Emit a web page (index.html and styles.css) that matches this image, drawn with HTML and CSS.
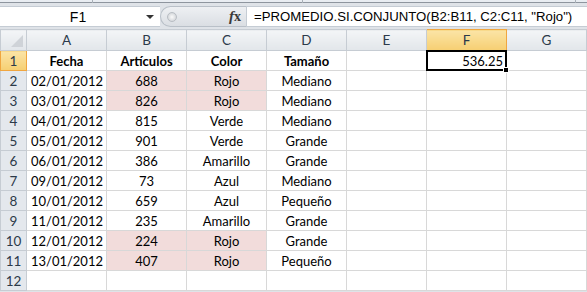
FILE: index.html
```html
<!DOCTYPE html>
<html>
    <head>
        <title>PROMEDIO.SI.CONJUNTO</title>
        <link rel="stylesheet" href="styles.css">
    </head>
    <body>
        <div class="ribbon">
            <span class="rsep s1"></span>
            <span class="rsep s2"></span>
            <span class="rsep s3"></span>
        </div>
        <div class="fbar">
            <div class="namebox">
                <span class="name">F1</span>
                <span class="drop"></span>
            </div>
            <div class="pill">
                <span class="knob"></span>
                <span class="fx"><i>f</i>x</span>
            </div>
            <div class="formula">=PROMEDIO.SI.CONJUNTO(B2:B11, C2:C11, "Rojo")</div>
        </div>
        <table class="sheet">
            <colgroup>
                <col class="rh"><col class="c"><col class="c"><col class="c"><col class="c"><col class="c"><col class="c"><col class="c"><col class="edge">
            </colgroup>
            <thead>
                <tr>
                    <th class="corner"><span class="tri"></span></th>
                    <th>A</th><th>B</th><th>C</th><th>D</th><th>E</th><th class="sel">F</th><th>G</th><th></th>
                </tr>
            </thead>
            <tbody>
                <tr><th class="sel">1</th><td class="b ctr">Fecha</td><td class="b ctr">Artículos</td><td class="b ctr">Color</td><td class="b ctr">Tamaño</td><td></td><td class="active num">536.25<span class="cursor"><span class="handle"></span></span></td><td></td><td></td></tr>
                <tr><th>2</th><td class="num">02/01/2012</td><td class="ctr pink">688</td><td class="ctr pink">Rojo</td><td class="ctr">Mediano</td><td></td><td></td><td></td><td></td></tr>
                <tr><th>3</th><td class="num">03/01/2012</td><td class="ctr pink">826</td><td class="ctr pink">Rojo</td><td class="ctr">Mediano</td><td></td><td></td><td></td><td></td></tr>
                <tr><th>4</th><td class="num">04/01/2012</td><td class="ctr">815</td><td class="ctr">Verde</td><td class="ctr">Mediano</td><td></td><td></td><td></td><td></td></tr>
                <tr><th>5</th><td class="num">05/01/2012</td><td class="ctr">901</td><td class="ctr">Verde</td><td class="ctr">Grande</td><td></td><td></td><td></td><td></td></tr>
                <tr><th>6</th><td class="num">06/01/2012</td><td class="ctr">386</td><td class="ctr">Amarillo</td><td class="ctr">Grande</td><td></td><td></td><td></td><td></td></tr>
                <tr><th>7</th><td class="num">09/01/2012</td><td class="ctr">73</td><td class="ctr">Azul</td><td class="ctr">Mediano</td><td></td><td></td><td></td><td></td></tr>
                <tr><th>8</th><td class="num">10/01/2012</td><td class="ctr">659</td><td class="ctr">Azul</td><td class="ctr">Pequeño</td><td></td><td></td><td></td><td></td></tr>
                <tr><th>9</th><td class="num">11/01/2012</td><td class="ctr">235</td><td class="ctr">Amarillo</td><td class="ctr">Grande</td><td></td><td></td><td></td><td></td></tr>
                <tr><th>10</th><td class="num">12/01/2012</td><td class="ctr pink">224</td><td class="ctr pink">Rojo</td><td class="ctr">Grande</td><td></td><td></td><td></td><td></td></tr>
                <tr><th>11</th><td class="num">13/01/2012</td><td class="ctr pink">407</td><td class="ctr pink">Rojo</td><td class="ctr">Pequeño</td><td></td><td></td><td></td><td></td></tr>
                <tr><th>12</th><td></td><td></td><td></td><td></td><td></td><td></td><td></td><td></td></tr>
            </tbody>
        </table>
    </body>
</html>
```

FILE: styles.css
```css
*{
    margin: 0;
    padding: 0;
    box-sizing: border-box;
}
html{
    background: white;
}
body{
    width: 587px;
    height: 292px;
    overflow: hidden;
    font-family: Lato, "Liberation Sans", sans-serif;
    font-size: 13px;
    color: black;
    background: #dfe3e8;
}
.ribbon{
    position: relative;
    height: 3px;
    background: #e9edf2;
    border-bottom: 1px solid #8e959e;
}
.rsep{
    position: absolute;
    top: 0;
    width: 1px;
    height: 3px;
    background: #a9b0b8;
}
.s1{ left: 92px; }
.s2{ left: 302px; }
.s3{ left: 575px; }
.fbar{
    display: flex;
    height: 26px;
    padding: 3px 0 2px 0;
    background: #dfe3e8;
}
.namebox{
    display: flex;
    align-items: center;
    width: 160px;
    background: white;
    border-top: 1px solid #c5ccd4;
    border-bottom: 1px solid #c5ccd4;
}
.name{
    flex: 1;
    text-align: center;
    padding-left: 10px;
    font-family: "Liberation Sans", sans-serif;
    font-size: 14px;
}
.drop{
    width: 0;
    height: 0;
    margin-right: 6px;
    border-left: 4px solid transparent;
    border-right: 4px solid transparent;
    border-top: 4px solid #333;
}
.pill{
    display: flex;
    align-items: center;
    justify-content: space-between;
    width: 86px;
    padding: 0 5px 0 6px;
    background: linear-gradient(#eef0f3, #dadee3);
    border: 1px solid #b9c0c8;
    border-right: none;
    border-radius: 11px 0 0 11px;
}
.knob{
    width: 10px;
    height: 10px;
    border-radius: 50%;
    background: radial-gradient(#fafafa, #c8ccd1);
    border: 1px solid #b8bdc3;
}
.fx{
    font-family: "Liberation Serif", serif;
    font-size: 14px;
    font-weight: bold;
    color: #3a3a3a;
}
.fx i{
    font-size: 15px;
}
.formula{
    flex: 1;
    display: flex;
    align-items: center;
    padding-left: 7px;
    background: white;
    border: 1px solid #c5ccd4;
    border-right: none;
    font-family: "Liberation Sans", sans-serif;
    font-size: 13.2px;
    white-space: nowrap;
}
.sheet{
    table-layout: fixed;
    border-collapse: collapse;
    width: 587px;
    background: white;
}
.rh{ width: 26px; }
.c{ width: 80px; }
.edge{ width: 1px; }
.sheet th{
    height: 21px;
    font-weight: normal;
    font-size: 13.5px;
    color: #2c3a4a;
    background: linear-gradient(#f3f5f7, #e2e6ea);
    border: 1px solid #c6ccd3;
    text-align: center;
    padding: 0;
}
.sheet tbody th{
    height: 20px;
    background: #e4e8ed;
}
.sheet th.sel{
    background: linear-gradient(#fbe4a6, #f6cf72);
    border-color: #f0a640;
}
.corner{
    position: relative;
}
.tri{
    position: absolute;
    right: 3px;
    bottom: 3px;
    width: 0;
    height: 0;
    border-left: 12px solid transparent;
    border-bottom: 12px solid #cfd3d8;
}
.sheet td{
    height: 20px;
    padding: 0 3px;
    border: 1px solid #d8d8d8;
    white-space: nowrap;
    overflow: visible;
}
.sheet td:last-child{
    padding: 0;
}
.num{ text-align: right; }
.ctr{ text-align: center; }
.b{ font-weight: bold; }
.pink{ background: #f2dcdb; }
.active{
    position: relative;
}
.cursor{
    position: absolute;
    left: -1px;
    top: -1px;
    right: -1px;
    bottom: -1px;
    border: 2px solid black;
}
.handle{
    position: absolute;
    right: -4px;
    bottom: -4px;
    width: 6px;
    height: 6px;
    background: black;
    border: 1px solid white;
}
```
